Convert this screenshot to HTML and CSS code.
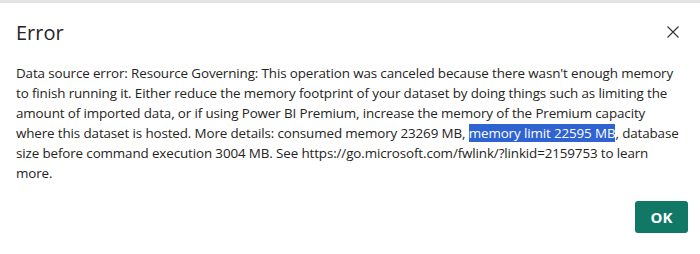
FILE: index.html
```html
<!DOCTYPE html>
<html lang="en">
<head>
    <meta charset="UTF-8">
    <title>Error</title>
    <link rel="stylesheet" href="styles.css">
</head>
<body>
    <div class="dialog">
        <header class="dialog-header">
            <h1>Error</h1>
            <button class="close" aria-label="Close">
                <svg width="12" height="12" viewBox="0 0 12 12"><path d="M0.5 0.5 L11.5 11.5 M11.5 0.5 L0.5 11.5" stroke="#323130" stroke-width="1.1" fill="none"/></svg>
            </button>
        </header>
        <p class="message">Data source error: Resource Governing: This operation was canceled because there wasn't enough memory<br>
            to finish running it. Either reduce the memory footprint of your dataset by doing things such as limiting the<br>
            amount of imported data, or if using Power BI Premium, increase the memory of the Premium capacity<br>
            where this dataset is hosted. More details: consumed memory 23269 MB, <span class="selected">memory limit 22595 MB</span>, database<br>
            size before command execution 3004 MB. See https://go.microsoft.com/fwlink/?linkid=2159753 to learn<br>
            more.</p>
        <footer class="dialog-footer">
            <button class="ok">OK</button>
        </footer>
    </div>
</body>
</html>
```

FILE: styles.css
```css
body {
    margin: 0;
    padding: 0;
    background: #ffffff;
    font-family: "Open Sans", "Noto Sans", Arial, sans-serif;
    color: #252423;
}

.dialog {
    width: 700px;
    height: 254px;
    border-top: 3px solid #e4e4e4;
    box-sizing: border-box;
    background: #fff;
}

.dialog-header {
    display: flex;
    justify-content: space-between;
    align-items: center;
    padding: 14px 21px 0 16px;
    height: 30px;
}

.dialog-header h1 {
    margin: 0;
    font-size: 20px;
    font-weight: 400;
    color: #252423;
}

.close {
    background: none;
    border: none;
    padding: 0;
    width: 12px;
    height: 12px;
    cursor: pointer;
    display: flex;
}

.message {
    margin: 16px 8px 0 16px;
    font-size: 13.4px;
    line-height: 20px;
    letter-spacing: -0.12px;
    white-space: nowrap;
}

.selected {
    background: #2f63d2;
    color: #fff;
}

.dialog-footer {
    display: flex;
    justify-content: flex-end;
    padding: 18px 12px 0 0;
}

.ok {
    background: #117865;
    color: #fff;
    border: none;
    border-radius: 3px;
    width: 53px;
    height: 32px;
    font-family: "Open Sans", Arial, sans-serif;
    font-size: 15px;
    font-weight: 700;
    cursor: pointer;
}
```
